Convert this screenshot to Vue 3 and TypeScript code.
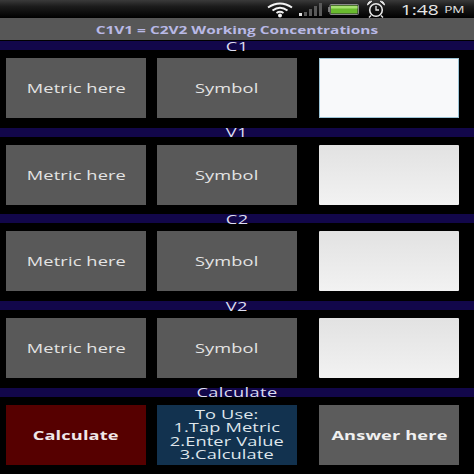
<script setup lang="ts">
const sections: string[] = ['C1', 'V1', 'C2', 'V2']
</script>

<template>
  <div class="screen">
    <div class="status">
      <svg class="wifi" width="28" height="17" viewBox="0 0 28 17">
        <path d="M2 6.5 Q14 -1.5 26 6.5" fill="none" stroke="#f2f2f2" stroke-width="2" />
        <path d="M6.5 9.5 Q14 4 21.5 9.5" fill="none" stroke="#f2f2f2" stroke-width="2" />
        <path d="M10.5 12 Q14 9.5 17.5 12" fill="none" stroke="#f2f2f2" stroke-width="1.8" />
        <circle cx="14" cy="14.5" r="2" fill="#f2f2f2" />
      </svg>
      <svg class="signal" width="24" height="15" viewBox="0 0 24 15">
        <rect x="0" y="11" width="3" height="3" fill="#e4e4e4" />
        <rect x="5" y="10" width="3" height="4" fill="#5a5a5a" />
        <rect x="10" y="7" width="3" height="7" fill="#5a5a5a" />
        <rect x="15" y="4" width="3" height="10" fill="#5a5a5a" />
        <rect x="20" y="1" width="3" height="13" fill="#5a5a5a" />
      </svg>
      <svg class="battery" width="31" height="11" viewBox="0 0 31 11">
        <rect x="0" y="3" width="2" height="5" fill="#777" />
        <rect x="2" y="0.5" width="28.5" height="10" rx="1" fill="#2c2c2c" stroke="#8a8a8a" />
        <rect x="3" y="1.5" width="26.5" height="8" fill="#69bb2e" />
        <rect x="3" y="2" width="26.5" height="2.5" fill="#a6e070" />
      </svg>
      <svg class="alarm" width="20" height="18" viewBox="0 0 20 18">
        <circle cx="10" cy="10" r="6.3" fill="none" stroke="#e8e8e8" stroke-width="1.6" />
        <path d="M10 6 V10 H13" fill="none" stroke="#e8e8e8" stroke-width="1.3" />
        <path d="M1.5 5 Q2 1 6 1.2 Z M18.5 5 Q18 1 14 1.2 Z" fill="#e8e8e8" stroke="#e8e8e8" />
        <path d="M5 15.5 L3 17.5 M15 15.5 L17 17.5" stroke="#e8e8e8" stroke-width="1.4" />
      </svg>
      <span class="clock">1:48</span>
      <span class="ampm">PM</span>
    </div>

    <div class="title"><span class="wide">C1V1 = C2V2 Working Concentrations</span></div>

    <template v-for="(name, i) in sections" :key="name">
      <div class="strip"><span class="wide">{{ name }}</span></div>
      <div class="row">
        <div class="cell grey"><span class="wide">Metric here</span></div>
        <div class="cell grey"><span class="wide">Symbol</span></div>
        <div class="cell input" :class="{ focused: i === 0 }"></div>
      </div>
    </template>

    <div class="strip"><span class="wide">Calculate</span></div>
    <div class="row">
      <div class="cell red"><span class="wide">Calculate</span></div>
      <div class="cell blue"><span class="wide">To Use:<br />1.Tap Metric<br />2.Enter Value<br />3.Calculate</span></div>
      <div class="cell answer"><span class="wide">Answer here</span></div>
    </div>
  </div>
</template>

<style>
html, body { margin: 0; background: #000; }
</style>

<style scoped>
.screen {
  width: 474px;
  height: 474px;
  overflow: hidden;
  background: #000;
  font-family: "Open Sans", "Noto Sans", sans-serif;
  color: #e6e6e6;
}
.wide {
  display: inline-block;
  white-space: nowrap;
  transform: scaleX(1.4);
}
.status {
  height: 18px;
  background: linear-gradient(#3a3a3a, #1c1c1c 35%, #000);
  display: flex;
  align-items: center;
  justify-content: flex-end;
  padding-right: 13px;
}
.wifi { margin-right: 5px; }
.signal { margin-right: 5px; }
.battery { margin-right: 7px; }
.alarm { margin-right: 19px; }
.clock {
  font-size: 15px;
  line-height: 18px;
  color: #e6e6e6;
  transform: scaleX(1.28);
  margin-right: 14px;
}
.ampm {
  font-size: 8.5px;
  line-height: 18px;
  margin-top: 2px;
  color: #e0e0e0;
  transform: scaleX(1.6);
}
.title {
  height: 22px;
  margin-bottom: 1px;
  background: #575757;
  color: #b9b9e6;
  font-size: 11px;
  font-weight: 700;
  line-height: 23px;
  text-align: center;
}
.strip {
  height: 9px;
  background: #12074a;
  display: flex;
  justify-content: center;
  align-items: center;
  font-size: 13px;
  letter-spacing: 0.3px;
  color: #dcdcf0;
}
.row {
  display: flex;
  margin: 8px 0 9.7px 6px;
  height: 60px;
  gap: 11px;
}
.cell {
  width: 140px;
  display: flex;
  align-items: center;
  justify-content: center;
  text-align: center;
  font-size: 13px;
  letter-spacing: 0.1px;
}
.grey { background: #595959; color: #e4e4e4; }
.input {
  margin-left: 11px;
  background: linear-gradient(#e2e2e2, #f2f2f2);
  border-radius: 1px;
}
.focused {
  background: #f8f9fa;
  box-shadow: inset 0 0 0 1px #9cc4d6;
}
.red { background: #560000; color: #f0e8e8; font-weight: 700; }
.blue { background: #12324f; color: #dfe6ec; line-height: 13.3px; }
.answer {
  margin-left: 11px;
  background: #5c5c5c;
  color: #f0f0f0;
  font-weight: 700;
}
</style>
